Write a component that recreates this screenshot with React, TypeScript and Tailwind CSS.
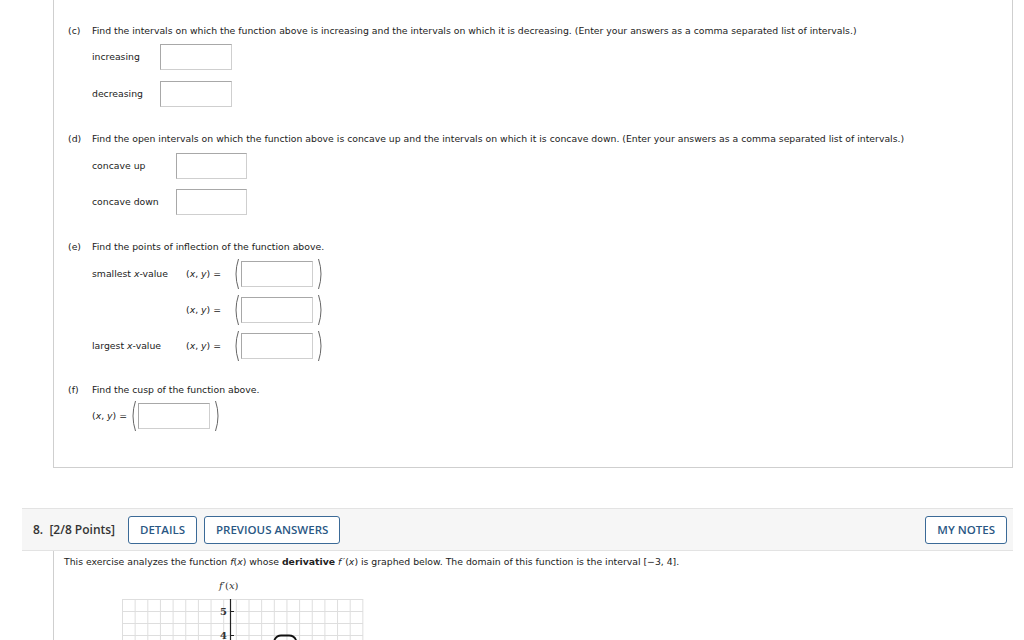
import type { ReactNode } from "react";

function Box({ w = "w-[72px]" }: { w?: string }) {
  return <div className={`${w} h-[26px] shrink-0 border border-[#a8a8a8] border-r-[#cfcfcf] border-b-[#cfcfcf] bg-white`} />;
}

function Paren({ right = false }: { right?: boolean }) {
  return (
    <svg width="7" height="32" viewBox="0 0 7 32" className="shrink-0">
      <path
        d={right ? "M1.5 1 Q6.5 16 1.5 31" : "M5.5 1 Q0.5 16 5.5 31"}
        fill="none"
        stroke="#555"
        strokeWidth="0.9"
      />
    </svg>
  );
}

function XY() {
  return (
    <span className="whitespace-pre">
      (<i>x</i>, <i>y</i>) =
    </span>
  );
}

function Point() {
  return (
    <div className="flex items-center">
      <Paren />
      <div className="ml-[1px]">
        <Box w="w-[72px]" />
      </div>
      <div className="ml-[4px]">
        <Paren right />
      </div>
    </div>
  );
}

function Part({ tag, children }: { tag: string; children: ReactNode }) {
  return (
    <div className="flex h-[12px] items-center">
      <span className="w-[24px] shrink-0">{tag}</span>
      <span>{children}</span>
    </div>
  );
}

function Row({ label, labelW, children, mt }: { label?: ReactNode; labelW: string; children: ReactNode; mt: string }) {
  return (
    <div className={`${mt} ml-[24px] flex h-[26px] items-center`}>
      <span className={`${labelW} shrink-0`}>{label}</span>
      {children}
    </div>
  );
}

function Graph() {
  const cols = Array.from({ length: 20 }, (_, i) => i * 12.65);
  const rows = [0.5, 12.5, 24.5, 36.5, 48.5];
  return (
    <svg width="250" height="46" viewBox="0 0 250 46" className="block">
      {cols.map((x) => (
        <line key={x} x1={x + 0.5} y1="0" x2={x + 0.5} y2="46" stroke="#dedede" strokeWidth="1" />
      ))}
      {rows.map((y) => (
        <line key={y} x1="0" y1={y} x2="241" y2={y} stroke="#dedede" strokeWidth="1" />
      ))}
      <line x1="108.5" y1="0" x2="108.5" y2="46" stroke="#222" strokeWidth="1.2" />
      <line x1="108.5" y1="12.5" x2="112" y2="12.5" stroke="#222" strokeWidth="1" />
      <line x1="108.5" y1="36.5" x2="112" y2="36.5" stroke="#222" strokeWidth="1" />
      <text x="105" y="16" textAnchor="end" fontSize="10" fontFamily="'DejaVu Serif', serif" fontWeight="bold" fill="#333">
        5
      </text>
      <text x="105" y="40" textAnchor="end" fontSize="10" fontFamily="'DejaVu Serif', serif" fontWeight="bold" fill="#333">
        4
      </text>
      <path
        d="M150 47 L153 40 Q155 36.5 159 36.5 L167 36.5 Q172 36.5 174 41 L176 47"
        fill="none"
        stroke="#111"
        strokeWidth="1.8"
      />
    </svg>
  );
}

function Button({ children }: { children: ReactNode }) {
  return (
    <div className="flex h-[28px] items-center rounded-[3px] border border-[#3b6a97] bg-white px-[11px] text-[11.5px] font-semibold text-[#2a5784]">
      {children}
    </div>
  );
}

export default function App() {
  return (
    <div className="min-h-screen bg-white pb-10 font-['DejaVu_Sans',Verdana,sans-serif] text-[9.3px] leading-[12px] text-[#222]">
      <div className="ml-[53px] h-[468px] w-[960px] border-x border-b border-[#cfcfcf] pl-[14px] pt-[25px]">
        <Part tag="(c)">
          Find the intervals on which the function above is increasing and the intervals on which it is decreasing. (Enter your answers as a comma separated list of intervals.)
        </Part>
        <Row mt="mt-[7px]" label="increasing" labelW="w-[68px]">
          <Box />
        </Row>
        <Row mt="mt-[11px]" label="decreasing" labelW="w-[68px]">
          <Box />
        </Row>

        <div className="mt-[26px]">
          <Part tag="(d)">
            Find the open intervals on which the function above is concave up and the intervals on which it is concave down. (Enter your answers as a comma separated list of intervals.)
          </Part>
        </div>
        <Row mt="mt-[8px]" label="concave up" labelW="w-[84px]">
          <Box w="w-[71px]" />
        </Row>
        <Row mt="mt-[10px]" label="concave down" labelW="w-[84px]">
          <Box w="w-[71px]" />
        </Row>

        <div className="mt-[26px]">
          <Part tag="(e)">Find the points of inflection of the function above.</Part>
        </div>
        <Row
          mt="mt-[8px]"
          labelW="w-[94px]"
          label={
            <>
              smallest <i>x</i>-value
            </>
          }
        >
          <span className="w-[47px] shrink-0">
            <XY />
          </span>
          <Point />
        </Row>
        <Row mt="mt-[10px]" labelW="w-[94px]">
          <span className="w-[47px] shrink-0">
            <XY />
          </span>
          <Point />
        </Row>
        <Row
          mt="mt-[10px]"
          labelW="w-[94px]"
          label={
            <>
              largest <i>x</i>-value
            </>
          }
        >
          <span className="w-[47px] shrink-0">
            <XY />
          </span>
          <Point />
        </Row>

        <div className="mt-[25px]">
          <Part tag="(f)">Find the cusp of the function above.</Part>
        </div>
        <Row mt="mt-[7px]" labelW="w-[38px]" label={<XY />}>
          <Point />
        </Row>
      </div>

      <div className="ml-[22px] mt-[40px] flex h-[43px] w-[991px] items-center border-y border-[#e3e3e3] bg-[#f6f6f6] pl-[11px] pr-[6px] font-['Open_Sans',sans-serif]">
        <span className="w-[95px] text-[12px] font-semibold text-[#333]">8.&nbsp; [2/8 Points]</span>
        <Button>DETAILS</Button>
        <div className="ml-[7px]">
          <Button>PREVIOUS ANSWERS</Button>
        </div>
        <div className="ml-auto">
          <Button>MY NOTES</Button>
        </div>
      </div>

      <div className="ml-[53px] w-[960px] border-l border-[#cfcfcf] pl-[10px] pt-[5px]">
        <p>
          This exercise analyzes the function <i>f</i>(<i>x</i>) whose <b>derivative</b> <i>f</i>&thinsp;′(<i>x</i>) is graphed below. The domain of this function is the interval [−3, 4].
        </p>
        <div className="ml-[155px] mt-[12px] font-['DejaVu_Serif',serif] text-[10px] leading-[12px] text-[#333]">
          <i>f</i>′(<i>x</i>)
        </div>
        <div className="ml-[58px] mt-[7px]">
          <Graph />
        </div>
      </div>
    </div>
  );
}
